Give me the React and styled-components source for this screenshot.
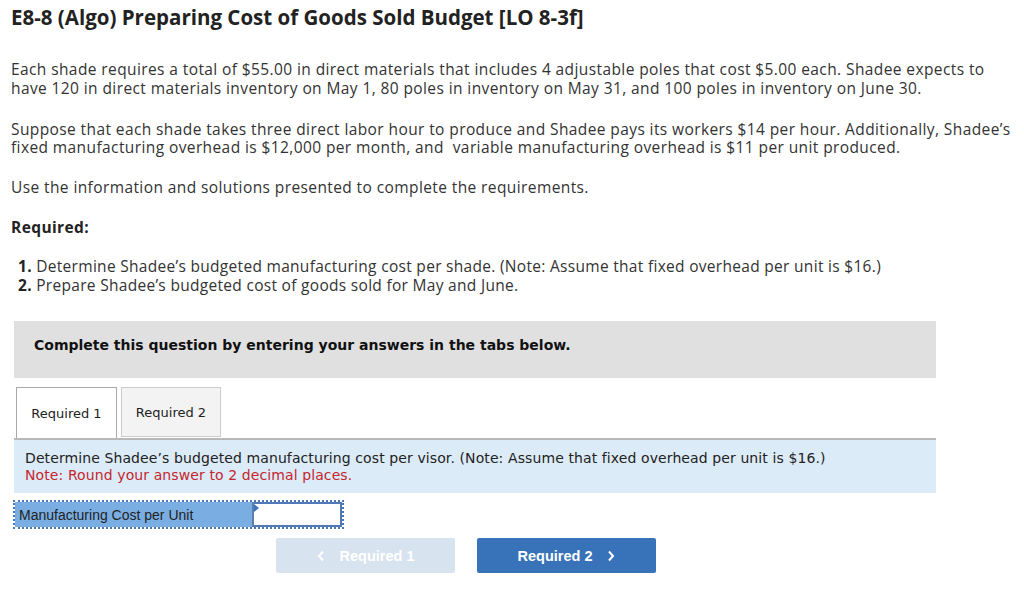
import React from "react";
import styled, { createGlobalStyle } from "styled-components";

const Global = createGlobalStyle`
  body {
    margin: 0;
    background: #fff;
    font-family: "Open Sans", "Liberation Sans", sans-serif;
    color: #222;
  }
`;

const Page = styled.div`
  width: 1024px;
  padding: 5px 0 0 11px;
  box-sizing: border-box;
`;

const Title = styled.h1`
  margin: 0;
  font-size: 20.5px;
  line-height: 24px;
  font-weight: 700;
  color: #222;
`;

const Para = styled.p`
  margin: ${(p) => p.$top || 0}px 0 0;
  font-size: 15.5px;
  letter-spacing: 0.4px;
  line-height: ${(p) => p.$lh || 19}px;
  color: #333;
`;

const Bold = styled.p`
  margin: 21px 0 0;
  font-size: 15.5px;
  line-height: 19px;
  letter-spacing: 0.4px;
  font-weight: 700;
  color: #222;
`;

const List = styled.ol`
  margin: 20px 0 0;
  padding: 0 0 0 7px;
  list-style: none;
  font-size: 15.5px;
  letter-spacing: 0.3px;
  line-height: 19px;
  color: #333;
  b {
    color: #222;
  }
`;

const Instruction = styled.div`
  margin: 26px 0 0 3px;
  width: 922px;
  height: 57px;
  background: #e0e0e0;
  box-sizing: border-box;
  padding: 16px 20px;
  font-family: "DejaVu Sans", Verdana, sans-serif;
  font-size: 14px;
  line-height: 16px;
  font-weight: 700;
  color: #111;
`;

const Tabs = styled.div`
  display: flex;
  gap: 4px;
  margin: 9px 0 0 5px;
  height: 51px;
  align-items: flex-start;
`;

const Tab = styled.div`
  width: ${(p) => p.$w}px;
  height: ${(p) => (p.$active ? 51 : 50)}px;
  box-sizing: border-box;
  border: 1px solid ${(p) => (p.$active ? "#aaa" : "#ccc")};
  border-bottom: ${(p) => (p.$active ? "none" : "1px solid #ccc")};
  background: ${(p) => (p.$active ? "#fff" : "#f3f3f3")};
  display: flex;
  align-items: center;
  justify-content: center;
  font-family: "DejaVu Sans", Verdana, sans-serif;
  font-size: 13px;
  color: #222;
`;

const Panel = styled.div`
  margin-left: 3px;
  width: 922px;
  border-top: 2px solid #b8b8b8;
  background: #dcebf8;
  box-sizing: border-box;
  padding: 10px 11px 9px;
  font-family: "DejaVu Sans", Verdana, sans-serif;
  font-size: 14px;
  letter-spacing: 0.1px;
  line-height: 17px;
  color: #222;
`;

const Red = styled.div`
  color: #c4262e;
`;

const InputRow = styled.div`
  margin: 7px 0 0 2px;
  width: 331px;
  height: 29px;
  box-sizing: border-box;
  border: 2px dotted #4a78b8;
  display: flex;
`;

const Label = styled.div`
  width: 239px;
  background: #7aaee3;
  border-right: 2px solid #5c7fae;
  display: flex;
  align-items: center;
  padding-left: 4px;
  box-sizing: border-box;
  font-family: "Liberation Sans", Arial, sans-serif;
  font-size: 14px;
  color: #222;
`;

const Field = styled.div`
  flex: 1;
  background: #fff;
  border: 2px solid #4f7ab5;
  border-left: none;
  position: relative;
  &::before {
    content: "";
    position: absolute;
    left: 0;
    top: 0;
    border-left: 5px solid #3b74c0;
    border-top: 4px solid transparent;
    border-bottom: 4px solid transparent;
  }
`;

const Nav = styled.div`
  display: flex;
  gap: 22px;
  margin: 9px 0 0 265px;
`;

const NavButton = styled.div`
  width: 179px;
  height: 35px;
  border-radius: 2px;
  background: ${(p) => (p.$disabled ? "#d8e3f0" : "#3873b9")};
  color: #fff;
  display: flex;
  align-items: center;
  justify-content: center;
  gap: 15px;
  font-family: "Liberation Sans", Arial, sans-serif;
  font-weight: 700;
  font-size: 14.5px;
  svg {
    display: block;
  }
`;

const Chevron = ({ left }) => (
  <svg width="8" height="12" viewBox="0 0 8 12">
    <path
      d={left ? "M6 1.5 L2 6 L6 10.5" : "M2 1.5 L6 6 L2 10.5"}
      fill="none"
      stroke="#fff"
      strokeWidth="2"
    />
  </svg>
);

export default function App() {
  return (
    <>
      <Global />
      <Page>
        <Title>E8-8 (Algo) Preparing Cost of Goods Sold Budget [LO 8-3f]</Title>
        <Para $top={31}>
          Each shade requires a total of $55.00 in direct materials that includes 4 adjustable poles that cost $5.00 each. Shadee expects to
          <br />
          have 120 in direct materials inventory on May 1, 80 poles in inventory on May 31, and 100 poles in inventory on June 30.
        </Para>
        <Para $top={22} $lh={18}>
          Suppose that each shade takes three direct labor hour to produce and Shadee pays its workers $14 per hour. Additionally, Shadee’s
          <br />
          fixed manufacturing overhead is $12,000 per month, and&nbsp; variable manufacturing overhead is $11 per unit produced.
        </Para>
        <Para $top={22}>Use the information and solutions presented to complete the requirements.</Para>
        <Bold>Required:</Bold>
        <List>
          <li>
            <b>1.</b> Determine Shadee’s budgeted manufacturing cost per shade. (Note: Assume that fixed overhead per unit is $16.)
          </li>
          <li>
            <b>2.</b> Prepare Shadee’s budgeted cost of goods sold for May and June.
          </li>
        </List>
        <Instruction>Complete this question by entering your answers in the tabs below.</Instruction>
        <Tabs>
          <Tab $active $w={101}>Required 1</Tab>
          <Tab $w={100}>Required 2</Tab>
        </Tabs>
        <Panel>
          Determine Shadee’s budgeted manufacturing cost per visor. (Note: Assume that fixed overhead per unit is $16.)
          <Red>Note: Round your answer to 2 decimal places.</Red>
        </Panel>
        <InputRow>
          <Label>Manufacturing Cost per Unit</Label>
          <Field />
        </InputRow>
        <Nav>
          <NavButton $disabled>
            <Chevron left />
            Required 1
          </NavButton>
          <NavButton>
            Required 2
            <Chevron />
          </NavButton>
        </Nav>
      </Page>
    </>
  );
}
